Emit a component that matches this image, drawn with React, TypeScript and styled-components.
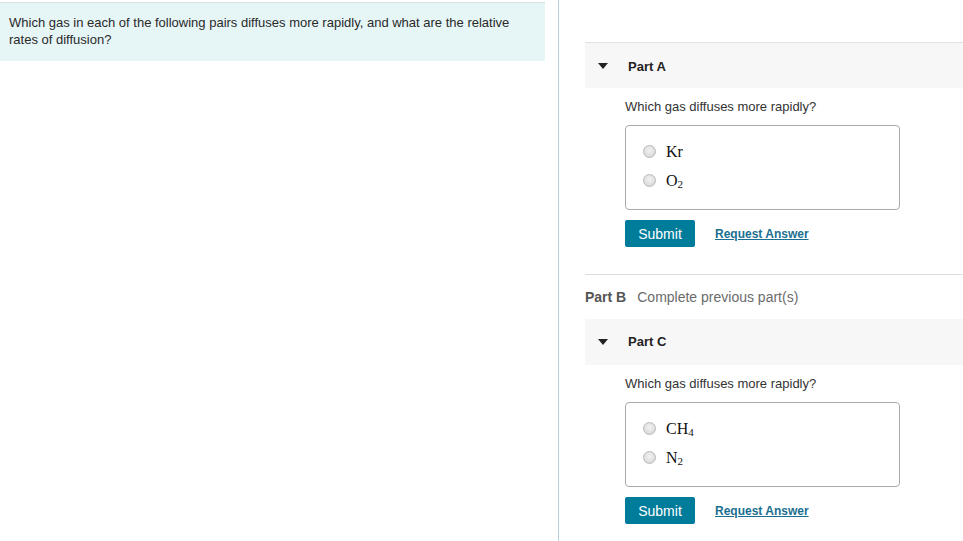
import styled, { createGlobalStyle } from 'styled-components';

const GlobalStyle = createGlobalStyle`
    html, body {
        margin: 0;
        padding: 0;
        background: #fff;
        font-family: "Liberation Sans", Arial, sans-serif;
        color: #222;
    }
`

interface Choice {
    base: string,
    sub?: string
}

interface PartData {
    name: string,
    question: string,
    choices: Choice[]
}

const partA: PartData = {
    name: 'Part A',
    question: 'Which gas diffuses more rapidly?',
    choices: [{ base: 'Kr' }, { base: 'O', sub: '2' }]
}

const partC: PartData = {
    name: 'Part C',
    question: 'Which gas diffuses more rapidly?',
    choices: [{ base: 'CH', sub: '4' }, { base: 'N', sub: '2' }]
}

const OpenPart = ({ part, first }: { part: PartData, first?: boolean }) => {
    return (
        <PartBlock>
            <PartHeader first={first}>
                <Caret />
                <PartTitle>{part.name}</PartTitle>
            </PartHeader>
            <PartBody>
                <Question>{part.question}</Question>
                <AnswerBox>
                    {part.choices.map((c) => (
                        <ChoiceRow key={c.base + (c.sub || '')}>
                            <Radio />
                            <ChoiceLabel>
                                {c.base}
                                {c.sub && <sub>{c.sub}</sub>}
                            </ChoiceLabel>
                        </ChoiceRow>
                    ))}
                </AnswerBox>
                <Actions>
                    <SubmitButton>Submit</SubmitButton>
                    <RequestLink href="#">Request Answer</RequestLink>
                </Actions>
            </PartBody>
        </PartBlock>
    )
}

export default function App() {
    return (
        <Page>
            <GlobalStyle />
            <LeftColumn>
                <Intro>
                    Which gas in each of the following pairs diffuses more rapidly, and what are the relative rates of diffusion?
                </Intro>
            </LeftColumn>
            <Divider />
            <RightColumn>
                <OpenPart part={partA} first />
                <Separator />
                <LockedPart>
                    <LockedName>Part B</LockedName>
                    <LockedNote>Complete previous part(s)</LockedNote>
                </LockedPart>
                <OpenPart part={partC} />
            </RightColumn>
        </Page>
    )
}

const Page = styled.div`
    display: flex;
    flex-direction: row;
    width: 963px;
    height: 541px;
    overflow: hidden;
`

const LeftColumn = styled.div`
    width: 545px;
    flex-shrink: 0;
    padding-top: 2px;
`

const Intro = styled.div`
    border-top: 1px solid #dadfe0;
    background-color: #e6f5f6;
    padding: 11px 30px 13px 9px;
    font-size: 13px;
    line-height: 17px;
    color: #2a2a2a;
`

const Divider = styled.div`
    width: 1px;
    margin-left: 13px;
    background-color: #b7d0e0;
    flex-shrink: 0;
`

const RightColumn = styled.div`
    flex: 1;
    margin-left: 26px;
    padding-top: 42px;
    display: flex;
    flex-direction: column;
`

const PartBlock = styled.div`
    display: flex;
    flex-direction: column;
`

const PartHeader = styled.div((props: { first?: boolean }) => `
    height: 46px;
    box-sizing: border-box;
    border-top: 1px solid ${props.first ? '#e2e2e2' : '#f7f7f7'};
    background-color: #f7f7f7;
    display: flex;
    align-items: center;
    padding-left: 13px;
    padding-top: ${props.first ? 1 : 0}px;
    padding-bottom: ${props.first ? 0 : 2}px;
`)

const Caret = styled.span`
    width: 0;
    height: 0;
    border-left: 5px solid transparent;
    border-right: 5px solid transparent;
    border-top: 6px solid #222;
    margin-right: 20px;
`

const PartTitle = styled.span`
    font-size: 13px;
    font-weight: bold;
    color: #222;
`

const PartBody = styled.div`
    padding: 11px 0 0 40px;
    display: flex;
    flex-direction: column;
`

const Question = styled.div`
    font-size: 13px;
    line-height: 16px;
    color: #333;
    margin-bottom: 10px;
`

const AnswerBox = styled.div`
    width: 275px;
    height: 85px;
    border: 1px solid #aaa;
    border-radius: 4px;
    padding: 17px 0 0 17px;
    box-sizing: border-box;
    display: flex;
    flex-direction: column;
    gap: 12px;
`

const ChoiceRow = styled.div`
    display: flex;
    align-items: center;
    height: 17px;
`

const Radio = styled.span`
    width: 11px;
    height: 11px;
    border-radius: 50%;
    border: 1px solid #b9b9b9;
    background: radial-gradient(circle at 50% 40%, #f2f2f2 0%, #dcdcdc 70%, #cfcfcf 100%);
    margin-right: 10px;
    flex-shrink: 0;
`

const ChoiceLabel = styled.span`
    font-family: "Liberation Serif", "Times New Roman", serif;
    font-size: 16px;
    color: #111;

    sub {
        font-size: 11px;
        vertical-align: -2px;
        line-height: 0;
    }
`

const Actions = styled.div`
    display: flex;
    align-items: center;
    gap: 20px;
    margin-top: 10px;
`

const SubmitButton = styled.button`
    width: 70px;
    height: 27px;
    border: none;
    border-radius: 2px;
    background-color: #007c9b;
    color: #fff;
    font-family: "Liberation Sans", Arial, sans-serif;
    font-size: 14px;
    padding: 0;
`

const RequestLink = styled.a`
    font-size: 12px;
    font-weight: bold;
    color: #1a6f91;
    text-decoration: underline;
`

const Separator = styled.div`
    height: 1px;
    background-color: #dedede;
    margin-top: 27px;
`

const LockedPart = styled.div`
    display: flex;
    align-items: center;
    height: 44px;
    font-size: 14px;
`

const LockedName = styled.span`
    font-weight: bold;
    color: #555;
    margin-right: 11px;
`

const LockedNote = styled.span`
    color: #6b6b6b;
`
